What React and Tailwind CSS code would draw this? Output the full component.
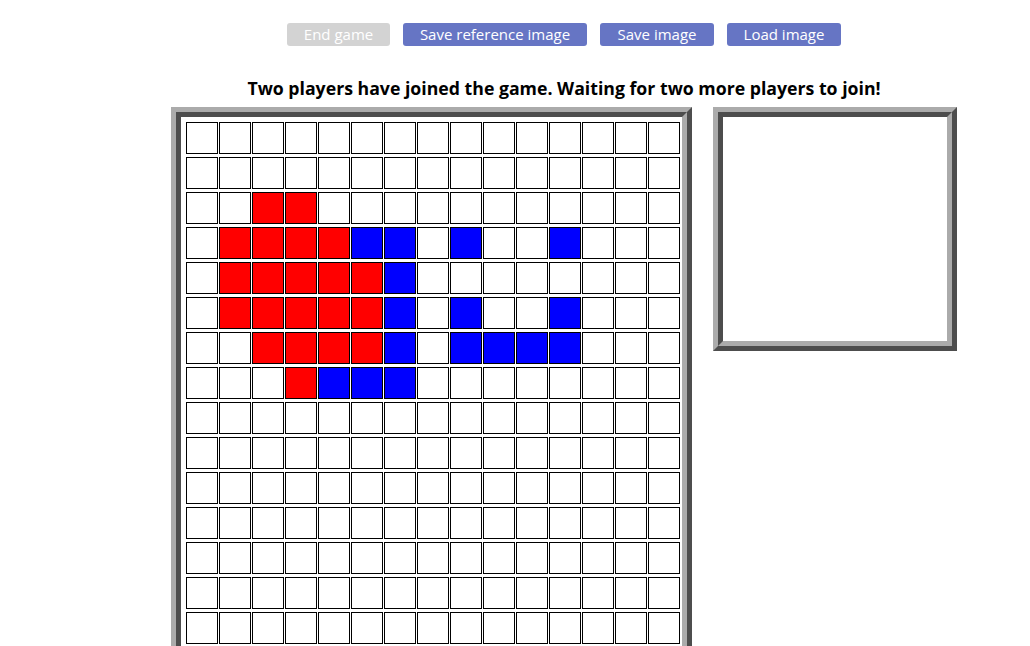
import React from 'react';

// board state: 0 = empty, 1 = red, 2 = blue
const PAINT = {
  2: { 2: 1, 3: 1 },
  3: { 1: 1, 2: 1, 3: 1, 4: 1, 5: 2, 6: 2, 8: 2, 11: 2 },
  4: { 1: 1, 2: 1, 3: 1, 4: 1, 5: 1, 6: 2 },
  5: { 1: 1, 2: 1, 3: 1, 4: 1, 5: 1, 6: 2, 8: 2, 11: 2 },
  6: { 2: 1, 3: 1, 4: 1, 5: 1, 6: 2, 8: 2, 9: 2, 10: 2, 11: 2 },
  7: { 3: 1, 4: 2, 5: 2, 6: 2 },
};

const ROWS = 15;
const COLS = 15;

const Bevel = ({ children, className = '' }) => (
  <div className="border-[5px] border-t-[#ababab] border-l-[#ababab] border-r-[#4d4d4d] border-b-[#4d4d4d]">
    <div className={`border-[5px] border-t-[#4d4d4d] border-l-[#4d4d4d] border-r-[#ababab] border-b-[#ababab] bg-white ${className}`}>
      {children}
    </div>
  </div>
);

const Cell = ({ v }) => {
  const bg = v === 1 ? 'bg-[#ff0000]' : v === 2 ? 'bg-[#0000ff]' : 'bg-white';
  return <div className={`w-[32px] h-[32px] border border-black ${bg}`} />;
};

export default function App() {
  const cells = [];
  for (let r = 0; r < ROWS; r++) {
    for (let c = 0; c < COLS; c++) {
      cells.push(<Cell key={`${r}-${c}`} v={(PAINT[r] && PAINT[r][c]) || 0} />);
    }
  }

  return (
    <div className="w-[1030px] h-[646px] overflow-hidden bg-white" style={{ fontFamily: '"Open Sans", "Noto Sans", sans-serif' }}>
      <div className="ml-[171px] w-[786px] flex flex-col items-center">
        <div className="mt-[23px] flex gap-[13px] text-[15px] leading-none">
          <button className="h-[23px] w-[103px] rounded-[3px] bg-[#d3d3d3] text-white">End game</button>
          <button className="h-[23px] w-[184px] rounded-[3px] bg-[#6675c4] text-white">Save reference image</button>
          <button className="h-[23px] w-[114px] rounded-[3px] bg-[#6675c4] text-white">Save image</button>
          <button className="h-[23px] w-[114px] rounded-[3px] bg-[#6675c4] text-white">Load image</button>
        </div>
        <h2 className="mt-[30px] text-[17.7px] font-bold text-black leading-[24px]">
          Two players have joined the game. Waiting for two more players to join!
        </h2>
      </div>
      <div className="ml-[171px] mt-[7px] flex items-start gap-[21px]">
        <Bevel className="w-[511px] pl-[5px] pt-[5px] pb-[5px]">
          <div className="grid grid-cols-[repeat(15,32px)] gap-x-[1px] gap-y-[3px]">
            {cells}
          </div>
        </Bevel>
        <Bevel className="w-[234px] h-[234px]" />
      </div>
    </div>
  );
}
